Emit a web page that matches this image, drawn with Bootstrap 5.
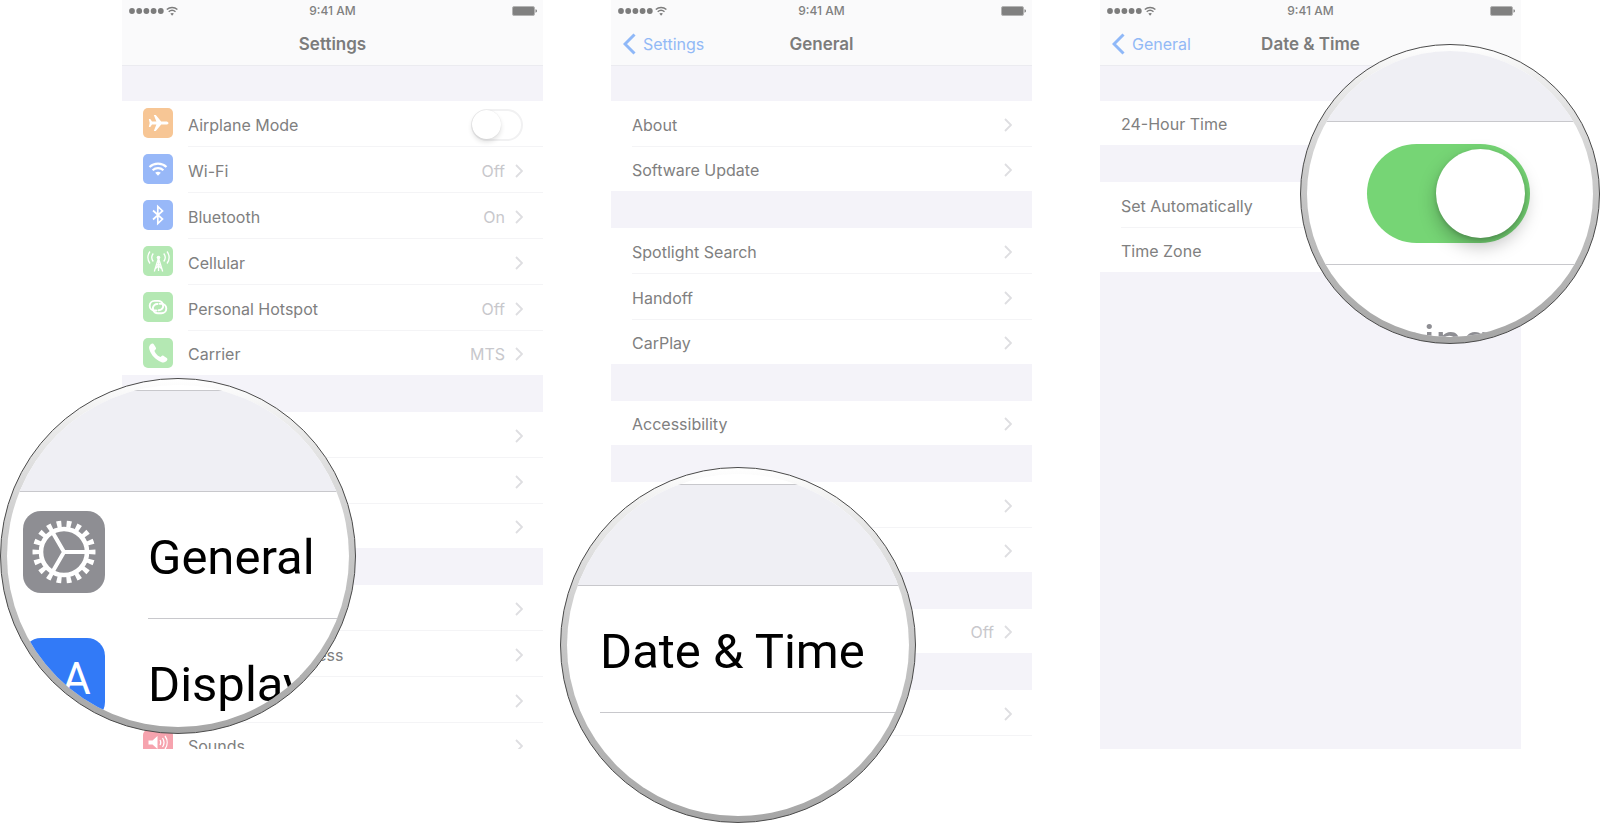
<!DOCTYPE html>
<html lang="en">
<head>
<meta charset="utf-8">
<meta name="viewport" content="width=device-width, initial-scale=1">
<title>Settings, General, Date &amp; Time</title>
<link href="https://cdn.jsdelivr.net/npm/bootstrap@5.3.0/dist/css/bootstrap.min.css" rel="stylesheet">
<style>
  body { background: #fff; font-family: Inter, "Liberation Sans", sans-serif; font-size: 16px; line-height: 24px; color: #808080; }
  .phones { gap: 68px; padding: 0 79px 74px 122px; height: 100vh; }
  .phone { flex: 1 1 0; min-width: 0; }
  .screen { background: #f4f3f9; height: 100%; overflow: hidden; }
  .topbar { background: #fafafb; border-bottom: 1px solid #ebebf0; height: 66px; }
  .statusbar { height: 22px; padding: 0 6px; font-size: 12px; line-height: 22px; font-weight: 500; }
  .statusbar .side { flex: 1 1 0; }
  .titlebar { height: 43px; padding: 0 12px; }
  .titlebar h1 { font-size: 17px; line-height: 24px; font-weight: 600; margin: 0; color: #7c7c7c; }
  .titlebar .side { flex: 1 1 0; }
  .back { color: #92b9f6; text-decoration: none; gap: 7px; }
  .group { list-style: none; margin: 0 0 37px; padding: 0; background: #fff; }
  .first { margin-top: 35px; }
  .entry { height: 46px; padding-left: 21px; gap: 15px; color: inherit; text-decoration: none; }
  li:last-child > .entry { height: 44px; }
  .entry .tile { margin-top: 7px; flex: none; }
  .line { flex: 1; align-self: stretch; border-bottom: 1px solid #f4f4f6; padding: 2px 20px 0 0; }
  li:last-child .line { border-bottom-color: transparent; }
  .group.open { margin: 0; height: 300px; }
  .val { color: #c8c8cc; margin-left: auto; margin-right: 10px; }
  .chev { margin-left: auto; flex: none; }
  .val + .chev { margin-left: 0; }

  .toggle { appearance: none; width: 52px; height: 32px; border-radius: 50rem; border: 2px solid #f1f1f2; background: #fff; margin: 0 0 0 auto; position: relative; flex: none; }
  .toggle::before { content: ""; position: absolute; left: -1px; top: -1px; width: 29px; height: 29px; border-radius: 50%; background: #fff; box-shadow: 0 3px 5px rgba(0,0,0,.12), 0 0 1px rgba(0,0,0,.12); }
  .toggle.big { width: 163px; height: 99px; border: 0; background: #76d575; margin: 0; }
  .toggle.big::before { left: auto; right: 5px; top: 5px; width: 89px; height: 89px; box-shadow: 0 8px 18px rgba(0,0,0,.26), 0 2px 4px rgba(0,0,0,.16); }

  .lens { position: absolute; width: 356px; height: 356px; border-radius: 50%; border: 1px solid #4a4a4a; padding: 6px; background: linear-gradient(#fff, #ececec 12%, #c9c9c9 45%, #a6a6a6); z-index: 2; }
  .lens-a { left: -122px; top: 378px; }
  .lens-b { left: -51px; top: 467px; }
  .lens-c { right: -79px; top: 44px; width: 300px; height: 300px; }
  .glass { width: 100%; height: 100%; border-radius: 50%; overflow: hidden; background: #fff; color: #000; font-family: Roboto, "Liberation Sans", sans-serif; font-size: 49px; line-height: 60px; }
  .lens-a .glass { padding-top: 5px; }
  .lens-b .glass { padding-top: 10px; }
  .band { background: #efeff4; border-top: 1px solid #c8c8cc; border-bottom: 1px solid #c8c8cc; height: 102px; }
  .lens-c .band { border-top: 0; height: 71px; }
  .zoomed { height: 127px; padding-left: 16px; gap: 43px; white-space: nowrap; }
  .lens-b .zoomed { padding-left: 33px; }
  .zoomed .tile { margin-top: 19px; flex: none; }
  .zoomed .name { flex: 1; border-bottom: 1px solid #c8c8cc; height: 100%; padding-top: 36px; }
  .tile-aa { width: 82px; height: 82px; border-radius: 18px; background: #327af7; color: #fff; font-size: 44px; padding-left: 39px; }
  .zoomed-switch { height: 143px; padding-left: 60px; border-bottom: 1px solid #c8c8cc; }
  .zone { color: #8e8e93; padding: 10px 0 0 91px; height: 143px; }
</style>
</head>
<body>
<svg class="d-none" xmlns="http://www.w3.org/2000/svg">
  <symbol id="signal" viewBox="0 0 50 12">
    <g fill="#7c7c7c"><circle cx="4" cy="6" r="2.900"/><circle cx="11.200" cy="6" r="2.900"/><circle cx="18.400" cy="6" r="2.900"/><circle cx="25.600" cy="6" r="2.900"/><circle cx="32.800" cy="6" r="2.900"/><path d="M42.300 8.600a3 3 0 0 1 3.600 0L44.100 10.700z"/></g>
    <path d="M38.800 4.500a8 8 0 0 1 10.600 0M40.700 6.800a5.200 5.200 0 0 1 6.800 0" fill="none" stroke="#7c7c7c" stroke-width="1.400"/>
  </symbol>
  <symbol id="battery" viewBox="0 0 25 10"><rect x=".5" y=".5" width="22" height="9" rx="1.500" fill="#808080" stroke="#b4b4b4"/><path d="M23.500 3.300q1.500.3 1.500 1.700t-1.500 1.700z" fill="#7c7c7c"/></symbol>
  <symbol id="chev" viewBox="0 0 8 14"><path d="M1 1 7 7 1 13" fill="none" stroke="#dedee1" stroke-width="1.800"/></symbol>
  <symbol id="backarrow" viewBox="0 0 13 22"><path d="M11.500 1.500 2 11l9.500 9.500" fill="none" stroke="#8fb8f8" stroke-width="3"/></symbol>
</svg>

<main class="phones d-flex">
  <section class="phone position-relative" aria-label="Settings">
    <div class="screen">
      <header class="topbar">
        <div class="statusbar d-flex align-items-center">
          <span class="side d-flex"><svg width="50" height="12"><use href="#signal"/></svg></span>
          <span>9:41 AM</span>
          <span class="side d-flex justify-content-end"><svg width="25" height="10"><use href="#battery"/></svg></span>
        </div>
        <div class="titlebar d-flex align-items-center justify-content-center"><h1>Settings</h1></div>
      </header>
      <ul class="group first">
        <li><div class="entry d-flex align-items-start">
          <svg class="tile" width="30" height="30" viewBox="0 0 30 30"><rect width="30" height="30" rx="5" fill="#f7c695"/><path fill="#fff" d="M25.500 15c0 1-1.200 1.600-2.600 1.600h-4.700L12.800 23h-2l2.600-6.400H9L7.300 19H5.800l.9-4-.9-4h1.500L9 13.400h4.400L10.800 7h2l5.400 6.400h4.700c1.400 0 2.600.6 2.600 1.600z"/></svg>
          <div class="line d-flex align-items-center"><label for="airplane">Airplane Mode</label><input class="toggle" type="checkbox" role="switch" id="airplane"></div></div></li>
        <li><a href="#" class="entry d-flex align-items-start">
          <svg class="tile" width="30" height="30" viewBox="0 0 30 30"><rect width="30" height="30" rx="5" fill="#98b8f8"/><g fill="none" stroke="#fff" stroke-width="2.200"><path d="M6.500 13a12.500 12.500 0 0 1 17 0M9.600 16.300a8 8 0 0 1 10.800 0"/></g><path fill="#fff" d="M12.200 18.800a4.500 4.500 0 0 1 5.600 0L15 21.800z"/></svg>
          <span class="line d-flex align-items-center"><span>Wi-Fi</span><span class="val">Off</span><svg class="chev" width="8" height="14"><use href="#chev"/></svg></span></a></li>
        <li><a href="#" class="entry d-flex align-items-start">
          <svg class="tile" width="30" height="30" viewBox="0 0 30 30"><rect width="30" height="30" rx="5" fill="#98b8f8"/><path fill="none" stroke="#fff" stroke-width="1.700" d="m10 10.500 9.500 8.500-4.700 4.500v-17l4.700 4.500L10 19.500"/></svg>
          <span class="line d-flex align-items-center"><span>Bluetooth</span><span class="val">On</span><svg class="chev" width="8" height="14"><use href="#chev"/></svg></span></a></li>
        <li><a href="#" class="entry d-flex align-items-start">
          <svg class="tile" width="30" height="30" viewBox="0 0 30 30"><rect width="30" height="30" rx="5" fill="#b4e8b3"/><g fill="none" stroke="#fff" stroke-width="1.300"><path d="M7 5.500a9.500 9.500 0 0 0 0 12M24 5.500a9.500 9.500 0 0 1 0 12M10.300 7.500a6.500 6.500 0 0 0 0 8M20.700 7.500a6.500 6.500 0 0 1 0 8"/><path d="m15.500 12-4.200 13.500M15.500 12l4.200 13.500M15.500 12v13M13.500 18l5.500 5M17.500 18l-5.500 5"/></g><circle cx="15.500" cy="11.500" r="1.800" fill="#fff"/></svg>
          <span class="line d-flex align-items-center"><span>Cellular</span><svg class="chev" width="8" height="14"><use href="#chev"/></svg></span></a></li>
        <li><a href="#" class="entry d-flex align-items-start">
          <svg class="tile" width="30" height="30" viewBox="0 0 30 30"><rect width="30" height="30" rx="5" fill="#b4e8b3"/><g fill="none" stroke="#fff" stroke-width="1.900" stroke-linecap="round"><path d="M13.300 18.500H11.500a4.800 4.800 0 0 1 0-9.600h3.800a4.800 4.800 0 0 1 3.200 8.400q-1.200 1-3 .9"/><path d="M16.700 11.700h1.800a4.800 4.800 0 0 1 0 9.600h-3.800a4.800 4.800 0 0 1-3.200-8.400q1.200-1 3-.9"/></g></svg>
          <span class="line d-flex align-items-center"><span>Personal Hotspot</span><span class="val">Off</span><svg class="chev" width="8" height="14"><use href="#chev"/></svg></span></a></li>
        <li><a href="#" class="entry d-flex align-items-start">
          <svg class="tile" width="30" height="30" viewBox="0 0 30 30"><rect width="30" height="30" rx="5" fill="#b4e8b3"/><path fill="#fff" d="M8.600 5.800c1-.6 1.800-.1 2.500 1l1.700 2.700c.5.900.3 1.600-.5 2.200-.9.700-1 1-.5 2 1.100 2 2.600 3.700 4.600 4.900.9.500 1.300.4 2-.4.700-.8 1.400-.9 2.300-.3l2.700 1.900c1 .7 1.400 1.500.7 2.500-1.400 2-3.500 2.700-6 1.600C12.500 21.700 8.300 17.400 6.400 11.500c-.8-2.500-.1-4.400 2.200-5.700z"/></svg>
          <span class="line d-flex align-items-center"><span>Carrier</span><span class="val">MTS</span><svg class="chev" width="8" height="14"><use href="#chev"/></svg></span></a></li>
      </ul>
      <ul class="group">
        <li><a href="#" class="entry d-flex" aria-label="Notifications"><span class="line d-flex align-items-center"><svg class="chev" width="8" height="14"><use href="#chev"/></svg></span></a></li>
        <li><a href="#" class="entry d-flex" aria-label="Control Center"><span class="line d-flex align-items-center"><svg class="chev" width="8" height="14"><use href="#chev"/></svg></span></a></li>
        <li><a href="#" class="entry d-flex" aria-label="Do Not Disturb"><span class="line d-flex align-items-center"><svg class="chev" width="8" height="14"><use href="#chev"/></svg></span></a></li>
      </ul>
      <ul class="group">
        <li><a href="#" class="entry d-flex" aria-label="General"><span class="line d-flex align-items-center"><svg class="chev" width="8" height="14"><use href="#chev"/></svg></span></a></li>
        <li><a href="#" class="entry d-flex"><svg class="tile" width="30" height="30"></svg><span class="line d-flex align-items-center"><span>Display &amp; Brightness</span><svg class="chev" width="8" height="14"><use href="#chev"/></svg></span></a></li>
        <li><a href="#" class="entry d-flex" aria-label="Wallpaper"><span class="line d-flex align-items-center"><svg class="chev" width="8" height="14"><use href="#chev"/></svg></span></a></li>
        <li><a href="#" class="entry d-flex align-items-start">
          <svg class="tile" width="30" height="30" viewBox="0 0 30 30"><rect width="30" height="30" rx="5" fill="#f6a3ae"/><path fill="#fff" d="M5.500 10.500h4l5-4.500v13l-5-4.500h-4z"/><path d="M17 10a5 5 0 0 1 0 5M19.500 8a8 8 0 0 1 0 9M22 6a11 11 0 0 1 0 13" fill="none" stroke="#fff" stroke-width="1.300"/></svg>
          <span class="line d-flex align-items-center"><span>Sounds</span><svg class="chev" width="8" height="14"><use href="#chev"/></svg></span></a></li>
      </ul>
    </div>
    <div class="lens lens-a">
      <div class="glass">
        <div class="band"></div>
        <div class="zoomed d-flex align-items-start">
          <svg class="tile" width="82" height="82" viewBox="-41 -41 82 82"><rect x="-41" y="-41" width="82" height="82" rx="18" fill="#8e8e93"/><g fill="none" stroke="#fff"><circle r="23" stroke-width="4.600"/><circle r="28" stroke-width="7" pathLength="36" stroke-dasharray="0.94 1.060" stroke-dashoffset=".47"/><path stroke-width="4" d="M0 0H22M0 0-11-19M0 0-11 19"/></g></svg>
          <div class="name">General</div>
        </div>
        <div class="zoomed d-flex align-items-start">
          <div class="tile tile-aa d-flex align-items-center">A</div>
          <div class="name">Display</div>
        </div>
      </div>
    </div>
  </section>

  <section class="phone position-relative" aria-label="General">
    <div class="screen">
      <header class="topbar">
        <div class="statusbar d-flex align-items-center">
          <span class="side d-flex"><svg width="50" height="12"><use href="#signal"/></svg></span>
          <span>9:41 AM</span>
          <span class="side d-flex justify-content-end"><svg width="25" height="10"><use href="#battery"/></svg></span>
        </div>
        <div class="titlebar d-flex align-items-center">
          <div class="side d-flex"><a href="#" class="back d-flex align-items-center"><svg width="13" height="22"><use href="#backarrow"/></svg>Settings</a></div>
          <h1>General</h1><div class="side"></div>
        </div>
      </header>
      <ul class="group first">
        <li><a href="#" class="entry d-flex"><span class="line d-flex align-items-center"><span>About</span><svg class="chev" width="8" height="14"><use href="#chev"/></svg></span></a></li>
        <li><a href="#" class="entry d-flex"><span class="line d-flex align-items-center"><span>Software Update</span><svg class="chev" width="8" height="14"><use href="#chev"/></svg></span></a></li>
      </ul>
      <ul class="group">
        <li><a href="#" class="entry d-flex"><span class="line d-flex align-items-center"><span>Spotlight Search</span><svg class="chev" width="8" height="14"><use href="#chev"/></svg></span></a></li>
        <li><a href="#" class="entry d-flex"><span class="line d-flex align-items-center"><span>Handoff</span><svg class="chev" width="8" height="14"><use href="#chev"/></svg></span></a></li>
        <li><a href="#" class="entry d-flex"><span class="line d-flex align-items-center"><span>CarPlay</span><svg class="chev" width="8" height="14"><use href="#chev"/></svg></span></a></li>
      </ul>
      <ul class="group">
        <li><a href="#" class="entry d-flex"><span class="line d-flex align-items-center"><span>Accessibility</span><svg class="chev" width="8" height="14"><use href="#chev"/></svg></span></a></li>
      </ul>
      <ul class="group">
        <li><a href="#" class="entry d-flex" aria-label="Storage"><span class="line d-flex align-items-center"><svg class="chev" width="8" height="14"><use href="#chev"/></svg></span></a></li>
        <li><a href="#" class="entry d-flex" aria-label="Background App Refresh"><span class="line d-flex align-items-center"><svg class="chev" width="8" height="14"><use href="#chev"/></svg></span></a></li>
      </ul>
      <ul class="group">
        <li><a href="#" class="entry d-flex" aria-label="Restrictions"><span class="line d-flex align-items-center"><span class="val">Off</span><svg class="chev" width="8" height="14"><use href="#chev"/></svg></span></a></li>
      </ul>
      <ul class="group open">
        <li><a href="#" class="entry d-flex" aria-label="Date &amp; Time"><span class="line d-flex align-items-center"><svg class="chev" width="8" height="14"><use href="#chev"/></svg></span></a></li>
        <li><a href="#" class="entry d-flex" aria-label="Keyboard"><span class="line"></span></a></li>
      </ul>
    </div>
    <div class="lens lens-b">
      <div class="glass">
        <div class="band"></div>
        <div class="zoomed d-flex"><div class="name">Date &amp; Time</div></div>
      </div>
    </div>
  </section>

  <section class="phone position-relative" aria-label="Date &amp; Time">
    <div class="screen">
      <header class="topbar">
        <div class="statusbar d-flex align-items-center">
          <span class="side d-flex"><svg width="50" height="12"><use href="#signal"/></svg></span>
          <span>9:41 AM</span>
          <span class="side d-flex justify-content-end"><svg width="25" height="10"><use href="#battery"/></svg></span>
        </div>
        <div class="titlebar d-flex align-items-center">
          <div class="side d-flex"><a href="#" class="back d-flex align-items-center"><svg width="13" height="22"><use href="#backarrow"/></svg>General</a></div>
          <h1>Date &amp; Time</h1><div class="side"></div>
        </div>
      </header>
      <ul class="group first">
        <li><div class="entry d-flex"><span class="line d-flex align-items-center">24-Hour Time</span></div></li>
      </ul>
      <ul class="group">
        <li><div class="entry d-flex"><label for="auto" class="line d-flex align-items-center">Set Automatically</label></div></li>
        <li><div class="entry d-flex"><span class="line d-flex align-items-center">Time Zone</span></div></li>
      </ul>
    </div>
    <div class="lens lens-c">
      <div class="glass">
        <div class="band"></div>
        <div class="zoomed-switch d-flex align-items-center"><input class="toggle big" type="checkbox" role="switch" id="auto" checked></div>
        <div class="zone d-flex align-items-center">sing</div>
      </div>
    </div>
  </section>
</main>
<script src="https://cdn.jsdelivr.net/npm/bootstrap@5.3.0/dist/js/bootstrap.bundle.min.js"></script>
</body>
</html>
